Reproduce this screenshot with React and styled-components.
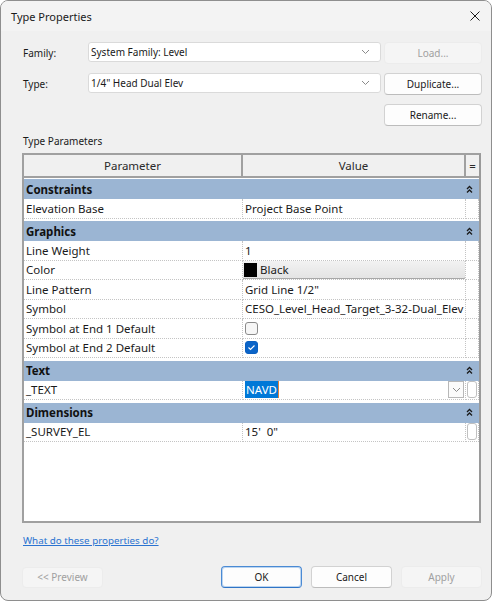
import React from 'react';
import styled, { createGlobalStyle } from 'styled-components';

const GlobalStyle = createGlobalStyle`
  html, body {
    margin: 0;
    padding: 0;
    background: #ffffff;
  }
  body {
    font-family: 'Noto Sans', 'Open Sans', sans-serif;
    color: #1a1a1a;
  }
`;

const FONT = "'Noto Sans', 'Open Sans', sans-serif";

const Window = styled.div`
  box-sizing: border-box;
  width: 492px;
  height: 601px;
  border: 1px solid #8e8e8e;
  border-radius: 8px;
  background: #f0f0f0;
  overflow: hidden;
  display: flex;
  flex-direction: column;
`;

const TitleBar = styled.div`
  height: 30px;
  flex: none;
  display: flex;
  align-items: center;
  justify-content: space-between;
  padding: 0 8px 0 10px;
  background: #f3f3f3;
  font-family: ${FONT};
  font-size: 11px;
  color: #1a1a1a;
`;

const CloseButton = styled.div`
  width: 16px;
  height: 16px;
  display: flex;
  align-items: center;
  justify-content: center;
`;

const Body = styled.div`
  flex: 1;
  display: flex;
  flex-direction: column;
  padding: 11px 10px 0 21px;
`;

const TopGrid = styled.div`
  display: grid;
  grid-template-columns: 63px 293px 98px;
  grid-auto-rows: 22px;
  column-gap: 3px;
  row-gap: 9px;
  align-items: center;
`;

const Label = styled.div`
  font-family: ${FONT};
  font-size: 10px;
  color: #1a1a1a;
  padding-left: 1px;
`;

const Combo = styled.div`
  box-sizing: border-box;
  height: 20px;
  margin-top: -2px;
  background: #ffffff;
  border: 1px solid #dadada;
  border-radius: 3px;
  display: flex;
  align-items: center;
  justify-content: space-between;
  padding: 0 10px 0 2px;
  font-family: ${FONT};
  font-size: 10px;
  color: #1a1a1a;
`;

const Button = styled.div`
  box-sizing: border-box;
  height: ${({ $h }) => $h || 22}px;
  width: ${({ $w }) => ($w ? `${$w}px` : 'auto')};
  display: flex;
  align-items: center;
  justify-content: center;
  border-radius: 4px;
  font-family: ${FONT};
  font-size: 10px;
  background: ${({ $disabled }) => ($disabled ? '#f5f5f5' : '#fdfdfd')};
  color: ${({ $disabled }) => ($disabled ? '#a0a0a0' : '#1a1a1a')};
  border: 1px solid
    ${({ $disabled, $primary }) =>
      $primary ? '#4a8ad4' : $disabled ? '#ececec' : '#d2d2d2'};
  border-bottom-color: ${({ $disabled, $primary }) =>
    $primary ? '#2f74c6' : $disabled ? '#ececec' : '#bcbcbc'};
  box-shadow: ${({ $primary }) => ($primary ? 'inset 0 0 0 1px #bcd5f0' : 'none')};
`;

const SectionLabel = styled.div`
  margin-top: 8px;
  height: 14px;
  line-height: 14px;
  font-family: ${FONT};
  font-size: 10px;
  color: #1a1a1a;
  padding-left: 1px;
`;

const PropGrid = styled.div`
  box-sizing: border-box;
  margin-top: 5px;
  width: 459px;
  height: 370px;
  border: 2px solid #a0a0a0;
  border-right-color: #9a9a9a;
  background: #ffffff;
  font-family: ${FONT};
  font-size: 11.5px;
  color: #1a1a1a;
`;

const Row = styled.div`
  display: grid;
  grid-template-columns: 219px 223px 13px;
`;

const HeadCell = styled.div`
  box-sizing: border-box;
  height: 23px;
  background: #f0f0f0;
  border-bottom: 2px solid #a0a0a0;
  border-right: ${({ $last }) => ($last ? 'none' : '2px solid #a0a0a0')};
  display: flex;
  align-items: center;
  justify-content: center;
  font-size: 11.5px;
  color: #2a2a2a;
`;

const CategoryRow = styled.div`
  display: flex;
  align-items: center;
  justify-content: space-between;
  height: 20px;
  margin-top: ${({ $first }) => ($first ? 1 : 2.5)}px;
  background: #9bb5d3;
  padding: 0 6px 0 2px;
  font-weight: 700;
  color: #111111;
`;

const Cell = styled.div`
  box-sizing: border-box;
  height: 19.5px;
  display: flex;
  align-items: center;
  padding-left: ${({ $pad }) => ($pad === undefined ? 2 : $pad)}px;
  border-bottom: 1px dotted #c4c4c4;
  border-right: 1px dotted #c4c4c4;
  white-space: nowrap;
  overflow: hidden;
  gap: 3px;
`;

const ColorButton = styled.div`
  box-sizing: border-box;
  height: 19px;
  margin: 0 -1px 0 -2px;
  flex: 1;
  display: flex;
  align-items: center;
  gap: 3px;
  padding-left: 2px;
  background: linear-gradient(#f2f2f2, #e4e4e4);
  border: 1px solid #a8a8a8;
  border-radius: 2px;
`;

const Swatch = styled.div`
  width: 13px;
  height: 14px;
  background: #000000;
`;

const Checkbox = styled.div`
  box-sizing: border-box;
  width: 13px;
  height: 13px;
  border-radius: 3px;
  border: 1px solid ${({ $checked }) => ($checked ? '#0a5fc0' : '#8a8a8a')};
  background: ${({ $checked }) => ($checked ? '#0a64c8' : '#f6f6f6')};
  display: flex;
  align-items: center;
  justify-content: center;
`;

const Selected = styled.span`
  background: #0078d7;
  color: #ffffff;
  padding: 1px 1px;
  border-right: 1px solid #e0803a;
`;

const EditorRow = styled.div`
  flex: 1;
  display: flex;
  align-items: center;
  justify-content: space-between;
`;

const DropButton = styled.div`
  box-sizing: border-box;
  width: 16px;
  height: 17px;
  margin-right: 1px;
  background: #fbfbfb;
  border: 1px solid #b8b8b8;
  display: flex;
  align-items: center;
  justify-content: center;
`;

const MiniBox = styled.div`
  box-sizing: border-box;
  width: 10px;
  height: 17px;
  margin-left: 1px;
  border: 1px solid #c0c0c0;
  border-radius: 3px;
  background: #ffffff;
`;

const HelpLink = styled.a`
  margin-top: 10px;
  height: 16px;
  line-height: 16px;
  font-family: ${FONT};
  font-size: 9.8px;
  color: #2b73d0;
  text-decoration: underline;
  padding-left: 1px;
  align-self: flex-start;
`;

const Footer = styled.div`
  margin-top: 17px;
  display: flex;
  align-items: center;
  width: 460px;
`;

const Spacer = styled.div`
  flex: 1;
`;

const FooterGroup = styled.div`
  display: flex;
  gap: 9px;
`;

const Chevron = () => (
  <svg width="9" height="6" viewBox="0 0 9 6">
    <polyline points="1,1 4.5,4.5 8,1" fill="none" stroke="#8a8a8a" strokeWidth="1" />
  </svg>
);

const Collapse = () => (
  <svg width="7" height="9" viewBox="0 0 7 9">
    <polyline points="1,4 3.5,1.5 6,4" fill="none" stroke="#1a1a1a" strokeWidth="1.3" />
    <polyline points="1,7.5 3.5,5 6,7.5" fill="none" stroke="#1a1a1a" strokeWidth="1.3" />
  </svg>
);

const Check = () => (
  <svg width="9" height="7" viewBox="0 0 9 7">
    <polyline points="1.5,3.5 3.5,5.5 7.5,1.5" fill="none" stroke="#ffffff" strokeWidth="1.1" />
  </svg>
);

const Category = ({ name, first }) => (
  <CategoryRow $first={first}>
    <span>{name}</span>
    <Collapse />
  </CategoryRow>
);

const Param = ({ name, children, pad, extra }) => (
  <Row>
    <Cell>{name}</Cell>
    <Cell $pad={pad}>{children}</Cell>
    <Cell $pad={0}>{extra}</Cell>
  </Row>
);

export default function App() {
  return (
    <Window>
      <GlobalStyle />
      <TitleBar>
        <span>Type Properties</span>
        <CloseButton>
          <svg width="10" height="10" viewBox="0 0 10 10">
            <path d="M0.5 0.5 L9.5 9.5 M9.5 0.5 L0.5 9.5" stroke="#1a1a1a" strokeWidth="1" />
          </svg>
        </CloseButton>
      </TitleBar>
      <Body>
        <TopGrid>
          <Label>Family:</Label>
          <Combo>
            <span>System Family: Level</span>
            <Chevron />
          </Combo>
          <Button $disabled>Load...</Button>

          <Label>Type:</Label>
          <Combo>
            <span>1/4" Head Dual Elev</span>
            <Chevron />
          </Combo>
          <Button>Duplicate...</Button>

          <span />
          <span />
          <Button>Rename...</Button>
        </TopGrid>

        <SectionLabel>Type Parameters</SectionLabel>

        <PropGrid>
          <Row>
            <HeadCell>Parameter</HeadCell>
            <HeadCell>Value</HeadCell>
            <HeadCell $last>=</HeadCell>
          </Row>

          <Category name="Constraints" first />
          <Param name="Elevation Base">Project Base Point</Param>

          <Category name="Graphics" />
          <Param name="Line Weight">1</Param>
          <Param name="Color" pad={0}>
            <ColorButton>
              <Swatch />
              <span>Black</span>
            </ColorButton>
          </Param>
          <Param name="Line Pattern">Grid Line 1/2"</Param>
          <Param name="Symbol">CESO_Level_Head_Target_3-32-Dual_Elev</Param>
          <Param name="Symbol at End 1 Default">
            <Checkbox />
          </Param>
          <Param name="Symbol at End 2 Default">
            <Checkbox $checked>
              <Check />
            </Checkbox>
          </Param>

          <Category name="Text" />
          <Param name="_TEXT" extra={<MiniBox />}>
            <EditorRow>
              <Selected>NAVD</Selected>
              <DropButton>
                <Chevron />
              </DropButton>
            </EditorRow>
          </Param>

          <Category name="Dimensions" />
          <Param name="_SURVEY_EL" extra={<MiniBox />}>
            15'&nbsp;&nbsp;0"
          </Param>
        </PropGrid>

        <HelpLink href="#">What do these properties do?</HelpLink>

        <Footer>
          <Button $disabled $w={81} $h={21}>
            &lt;&lt; Preview
          </Button>
          <Spacer />
          <FooterGroup>
            <Button $primary $w={81} $h={22}>
              OK
            </Button>
            <Button $w={81} $h={22}>
              Cancel
            </Button>
            <Button $disabled $w={81} $h={22}>
              Apply
            </Button>
          </FooterGroup>
        </Footer>
      </Body>
    </Window>
  );
}
